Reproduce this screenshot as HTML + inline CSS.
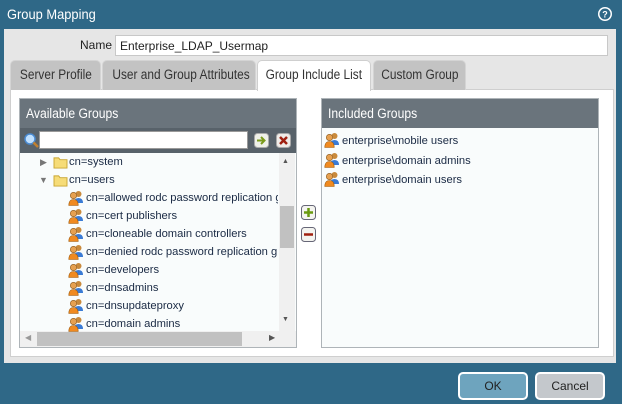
<!DOCTYPE html>
<html><head><style>
*{margin:0;padding:0;box-sizing:border-box}
body{width:622px;height:404px;background:#2f6887;font-family:"Liberation Sans",sans-serif;font-size:11.2px;color:#1a2a44;position:relative;overflow:hidden}
.a{position:absolute}
.title{left:7px;top:6px;color:#fff;font-size:14px;white-space:nowrap;transform:scaleX(0.92);transform-origin:left}
.main{left:4px;top:29px;width:612px;height:334px;background:#e6e6e6}
.tab{top:60px;height:30px;background:#c3c3c3;border:1px solid #d4d4d4;border-bottom:none;border-radius:5px 5px 0 0;font-size:13.5px;color:#333;text-align:center;line-height:28px;white-space:nowrap;overflow:visible}
.tab span{display:inline-block;transform:scaleX(0.88)}
.panel{left:10px;top:89px;width:604px;height:268px;background:#fff;border:1px solid #cfcfcf}
.box{border:1px solid #aeb4b8;background:#f9fcfc}
.hdr{background:#6a747c;color:#fff;font-size:13.5px;height:29px;line-height:29px;padding-left:6px;white-space:nowrap}
.hdr span{display:inline-block;transform:scaleX(0.9);transform-origin:left}
.row{position:absolute;height:18px;line-height:18px;white-space:nowrap}
.btn{top:372px;width:70px;height:28px;border:2px solid #fff;border-radius:5px;text-align:center;line-height:24px;font-size:12px;color:#222}
</style></head><body>
<svg width="0" height="0" style="position:absolute"><defs>
<symbol id="u" viewBox="0 0 16 16">
<circle cx="10.5" cy="4" r="3" fill="#c98a3c"/><path d="M6 13 Q6 8 10.5 8 Q15 8 15 13Z" fill="#3a7bd5"/>
<circle cx="5.5" cy="5.5" r="3.2" fill="#e6a050" stroke="#8a5a20" stroke-width="0.6"/><path d="M0.8 15.5 Q0.8 9.5 5.5 9.5 Q10.2 9.5 10.2 15.5Z" fill="#f08a20" stroke="#9a5a10" stroke-width="0.6"/>
</symbol>
<symbol id="f" viewBox="0 0 16 14"><path d="M1 2h5l1.5 2H15v9H1z" fill="#f6dc78" stroke="#c9a530"/></symbol>
</defs></svg>
<div class="a title">Group Mapping</div>
<svg class="a" style="left:597px;top:6px" width="16" height="16"><circle cx="8" cy="8" r="7" fill="#fff"/><circle cx="8" cy="8" r="5.5" fill="#2f6887"/><text x="8" y="11.5" font-size="9" font-weight="bold" fill="#fff" text-anchor="middle" font-family="Liberation Sans">?</text></svg>
<div class="a main"></div>
<div class="a" style="left:80px;top:38px;font-size:12px;color:#222">Name</div>
<div class="a" style="left:115px;top:35px;width:493px;height:21px;background:#fff;border:1px solid #c8c8c8;padding:3px 4px;font-size:12px;color:#222">Enterprise_LDAP_Usermap</div>
<div class="a panel"></div>
<div class="a tab" style="left:10px;width:91px"><span>Server Profile</span></div>
<div class="a tab" style="left:102px;width:154px"><span>User and Group Attributes</span></div>
<div class="a tab" style="left:257px;width:114px;background:#fff;height:31px;border-color:#cfcfcf"><span>Group Include List</span></div>
<div class="a tab" style="left:373px;width:93px"><span>Custom Group</span></div>

<div class="a box" style="left:19px;top:98px;width:278px;height:250px">
<div class="hdr"><span>Available Groups</span></div>
<div style="background:#58626a;height:25px;position:relative">
<svg class="a" style="left:3px;top:4px" width="16" height="16"><circle cx="7" cy="7" r="5" fill="#bfe0ff" stroke="#4a8ad0" stroke-width="1.5"/><path d="M10.5 10.5L15 15" stroke="#c08030" stroke-width="2.5"/></svg>
<div class="a" style="left:19px;top:3px;width:209px;height:18px;background:#fff;border:1px solid #999"></div>
<svg class="a" style="left:234px;top:5px" width="15" height="15"><rect x=".5" y=".5" width="14" height="14" rx="3" fill="#eef0e8" stroke="#aaa"/><path d="M3 7.5h7M7 4l3.5 3.5L7 11" stroke="#7a9a1a" stroke-width="2" fill="none"/></svg>
<svg class="a" style="left:256px;top:5px" width="15" height="15"><rect x=".5" y=".5" width="14" height="14" rx="3" fill="#f0ece8" stroke="#aaa"/><path d="M4 4l7 7M11 4l-7 7" stroke="#a02010" stroke-width="2.5"/></svg>
</div>
<div style="position:relative;height:179px;overflow:hidden">
<div class="row" style="left:20px;top:0"><span style="color:#777;font-size:9px">▶</span></div>
<svg class="a" style="left:33px;top:3px" width="15" height="13"><use href="#f"/></svg>
<div class="row" style="left:49px;top:0">cn=system</div>
<div class="row" style="left:19px;top:18px"><span style="color:#777;font-size:9px">▼</span></div>
<svg class="a" style="left:33px;top:21px" width="15" height="13"><use href="#f"/></svg>
<div class="row" style="left:49px;top:18px">cn=users</div>
<div class="a" style="left:259px;top:0;width:16px;height:179px;background:#f0f0f0"></div>
<div class="a" style="left:260px;top:53px;width:14px;height:42px;background:#c1c1c1"></div>
<div class="a" style="left:262px;top:5px;color:#555;font-size:7px">▲</div>
<div class="a" style="left:262px;top:163px;color:#555;font-size:7px">▼</div>
</div>
<div style="position:absolute;left:0;top:232px;width:276px;height:16px;background:#f0f0f0">
<div class="a" style="left:17px;top:1px;width:205px;height:14px;background:#c1c1c1"></div>
<div class="a" style="left:5px;top:2px;color:#999;font-size:8px">◀</div>
<div class="a" style="left:249px;top:2px;color:#555;font-size:8px">▶</div>
</div>
</div>

<svg class="a" style="left:301px;top:205px" width="15" height="15"><rect x=".5" y=".5" width="14" height="14" rx="3" fill="#f4f4f0" stroke="#667"/><path d="M7.5 3v9M3 7.5h9" stroke="#6a9a10" stroke-width="2.5"/></svg>
<svg class="a" style="left:301px;top:227px" width="15" height="15"><rect x=".5" y=".5" width="14" height="14" rx="3" fill="#f4f4f0" stroke="#667"/><path d="M3 7.5h9" stroke="#a02010" stroke-width="2.5"/></svg>

<div class="a box" style="left:321px;top:98px;width:278px;height:250px">
<div class="hdr"><span>Included Groups</span></div>
<svg class="a" style="left:2px;top:33px" width="16" height="16"><use href="#u"/></svg>
<div class="row" style="left:20px;top:33px">enterprise\mobile users</div>
<svg class="a" style="left:2px;top:53px" width="16" height="16"><use href="#u"/></svg>
<div class="row" style="left:20px;top:53px">enterprise\domain admins</div>
<svg class="a" style="left:2px;top:72px" width="16" height="16"><use href="#u"/></svg>
<div class="row" style="left:20px;top:72px">enterprise\domain users</div>
</div>

<div class="a btn" style="left:458px;background:#6ea4be">OK</div>
<div class="a btn" style="left:535px;background:#c4c8cc">Cancel</div>

<div class="a" style="left:20px;top:153px;width:258px;height:179px;overflow:hidden">
<svg class="a" style="left:48px;top:37px" width="16" height="16"><use href="#u"/></svg><div class="row" style="left:66px;top:36px">cn=allowed rodc password replication group</div>
<svg class="a" style="left:48px;top:55px" width="16" height="16"><use href="#u"/></svg><div class="row" style="left:66px;top:54px">cn=cert publishers</div>
<svg class="a" style="left:48px;top:73px" width="16" height="16"><use href="#u"/></svg><div class="row" style="left:66px;top:72px">cn=cloneable domain controllers</div>
<svg class="a" style="left:48px;top:91px" width="16" height="16"><use href="#u"/></svg><div class="row" style="left:66px;top:90px">cn=denied rodc password replication group</div>
<svg class="a" style="left:48px;top:109px" width="16" height="16"><use href="#u"/></svg><div class="row" style="left:66px;top:108px">cn=developers</div>
<svg class="a" style="left:48px;top:127px" width="16" height="16"><use href="#u"/></svg><div class="row" style="left:66px;top:126px">cn=dnsadmins</div>
<svg class="a" style="left:48px;top:145px" width="16" height="16"><use href="#u"/></svg><div class="row" style="left:66px;top:144px">cn=dnsupdateproxy</div>
<svg class="a" style="left:48px;top:163px" width="16" height="16"><use href="#u"/></svg><div class="row" style="left:66px;top:162px">cn=domain admins</div>
</div>
</body></html>
